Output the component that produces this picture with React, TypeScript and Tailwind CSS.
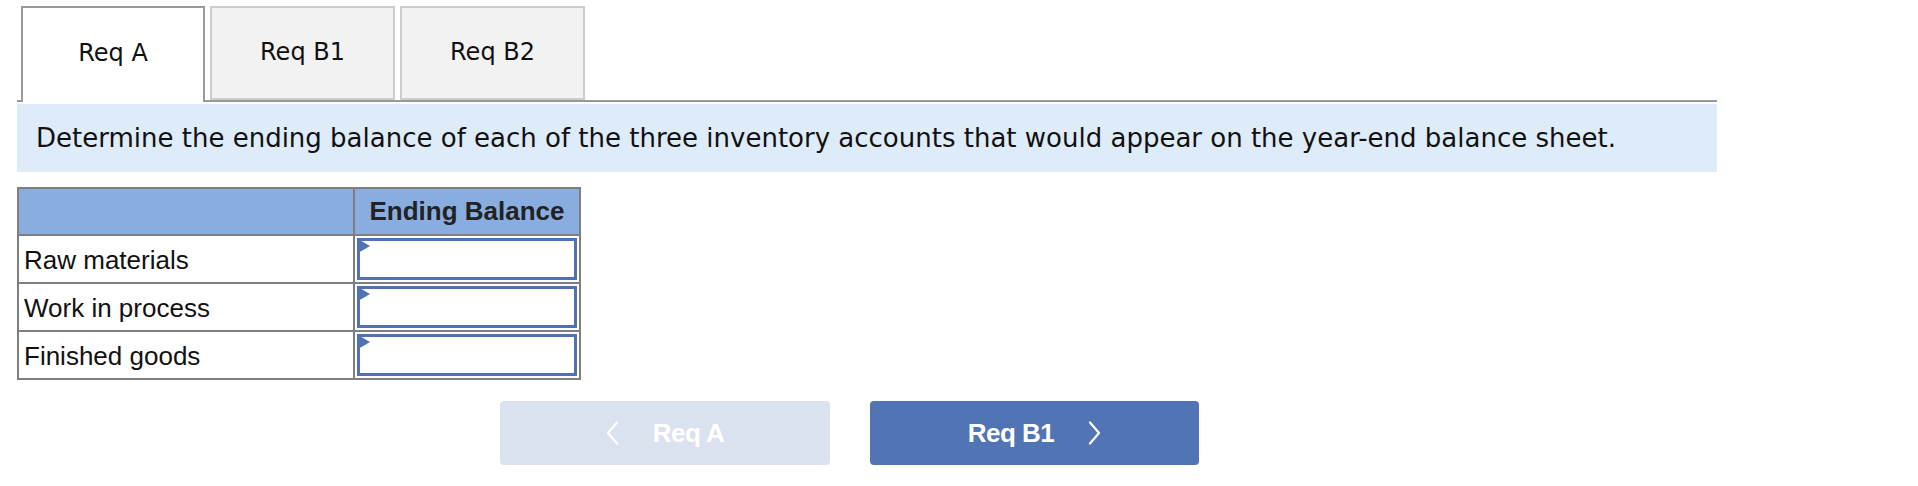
const tabs = ["Req A", "Req B1", "Req B2"];
const rows = ["Raw materials", "Work in process", "Finished goods"];

function Chevron({ dir }: { dir: "left" | "right" }) {
  return (
    <svg width="13" height="24" viewBox="0 0 13 24" fill="none" aria-hidden="true">
      <path
        d={dir === "left" ? "M11 1.5 L2 12 L11 22.5" : "M2 1.5 L11 12 L2 22.5"}
        stroke="currentColor"
        strokeWidth="2.2"
        strokeLinecap="round"
        strokeLinejoin="round"
      />
    </svg>
  );
}

function AmountInput({ label }: { label: string }) {
  return (
    <div className="relative h-full w-full p-[2px]">
      <input
        type="text"
        aria-label={label}
        className="h-full w-full border-[3px] border-[#4f72b4] bg-white px-2 text-right text-[24px] outline-none"
      />
      {/* entry marker */}
      <span className="pointer-events-none absolute left-[3px] top-[3px] h-0 w-0 border-y-[7px] border-l-[12px] border-y-transparent border-l-[#4f72b4]" />
    </div>
  );
}

export default function App() {
  return (
    <div className="w-[1918px] bg-white pl-[17px] pt-[7px] pb-[23px]">
      <div className="w-[1700px]">
        {/* tab strip */}
        <div className="flex h-[95px] items-end gap-[5px] border-b-2 border-[#999] pl-[4px]">
          {tabs.map((t, i) =>
            i === 0 ? (
              <button
                key={t}
                type="button"
                className="-mb-[2px] flex h-[96px] w-[184px] items-center justify-center border-2 border-b-0 border-[#999] bg-white pb-[4px] text-[24px] text-[#111]"
                style={{ fontFamily: '"DejaVu Sans", Verdana, sans-serif' }}
              >
                {t}
              </button>
            ) : (
              <button
                key={t}
                type="button"
                className="flex h-[94px] w-[185px] items-center justify-center border-2 border-[#ccc] bg-[#f2f2f2] pb-[2px] text-[24px] text-[#111]"
                style={{ fontFamily: '"DejaVu Sans", Verdana, sans-serif' }}
              >
                {t}
              </button>
            )
          )}
        </div>

        <div
          className="mt-[2px] flex h-[68px] items-center bg-[#deebf8] pl-[19px] text-[26px] text-[#111]"
          style={{ fontFamily: '"DejaVu Sans", Verdana, sans-serif' }}
        >
          Determine the ending balance of each of the three inventory accounts that would appear on the
          year-end balance sheet.
        </div>

        {/* balances table */}
        <table
          className="mt-[15px] w-[564px] border-collapse text-[26px]"
          style={{ fontFamily: '"Liberation Sans", Arial, sans-serif' }}
        >
          <thead>
            <tr className="h-[47px] bg-[#8aade0]">
              <th className="w-[336px] border-2 border-[#7f7f7f]" />
              <th className="border-2 border-[#7f7f7f] text-center font-bold text-[#222]">
                Ending Balance
              </th>
            </tr>
          </thead>
          <tbody>
            {rows.map((r) => (
              <tr key={r} className="h-[48px]">
                <td className="border-2 border-[#7f7f7f] pl-[5px] pt-[3px] text-[#111]">{r}</td>
                <td className="h-[48px] border-2 border-[#7f7f7f] p-0">
                  <AmountInput label={r} />
                </td>
              </tr>
            ))}
          </tbody>
        </table>

        {/* prev / next */}
        <div
          className="ml-[483px] mt-[21px] flex gap-[40px] text-[26px] font-bold text-white"
          style={{ fontFamily: '"Liberation Sans", Arial, sans-serif' }}
        >
          <button
            type="button"
            className="flex h-[64px] w-[330px] items-center justify-center gap-[34px] rounded-[4px] bg-[#dae2f0]"
          >
            <Chevron dir="left" />
            <span className="tracking-[-0.5px]">Req A</span>
          </button>
          <button
            type="button"
            className="flex h-[64px] w-[329px] items-center justify-center gap-[34px] rounded-[4px] bg-[#5174b4]"
          >
            <span className="tracking-[-0.5px]">Req B1</span>
            <Chevron dir="right" />
          </button>
        </div>
      </div>
    </div>
  );
}
